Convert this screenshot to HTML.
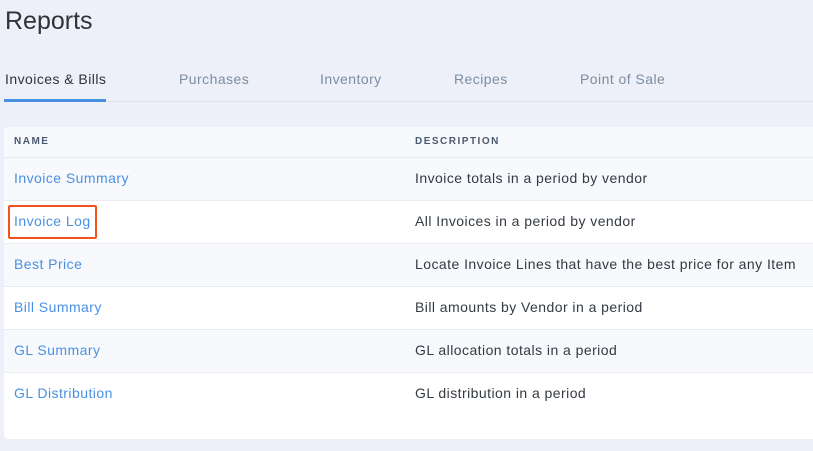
<!DOCTYPE html>
<html><head><style>
*{margin:0;padding:0;box-sizing:border-box}
body{width:813px;height:451px;background:#edf0f8;font-family:"Liberation Sans",sans-serif;position:relative;overflow:hidden}
h1{position:absolute;left:5px;top:7px;font-size:25px;font-weight:normal;color:#2e3338}
.tab{position:absolute;top:71px;font-size:14px;letter-spacing:0.45px;color:#7d8ca3;white-space:nowrap}
.line{position:absolute;left:4px;top:101px;width:809px;height:1px;background:#dfe3ec}
.ul{position:absolute;left:4px;top:99px;width:102px;height:3px;background:#4a90e2}
.card{position:absolute;left:4px;top:127px;width:815px;height:312px;background:#fff;border-radius:4px;overflow:hidden}
.row{position:absolute;left:0;width:100%;height:43px;border-top:1px solid #e8ecf2;font-size:14px;letter-spacing:0.45px;color:#333a42}
.alt{background:#f7f9fc}
.row span{position:absolute;top:12px}
.n{left:10px;color:#4a90e2}
.d{left:411px}
.hd{position:absolute;top:0;left:0;width:100%;height:30px;background:#f7f9fc;font-size:10px;font-weight:bold;letter-spacing:1.5px;color:#4a5a70}
.hd span{position:absolute;top:9px}
.box{position:absolute;left:8px;top:205px;width:89px;height:34px;border:2px solid #f0531c;border-radius:2px}
</style></head><body>
<h1>Reports</h1>
<div class="tab" style="left:5px;color:#2e3338">Invoices &amp; Bills</div>
<div class="tab" style="left:179px">Purchases</div>
<div class="tab" style="left:320px">Inventory</div>
<div class="tab" style="left:454px">Recipes</div>
<div class="tab" style="left:580px">Point of Sale</div>
<div class="line"></div><div class="ul"></div>
<div class="card">
<div class="hd"><span style="left:10px">NAME</span><span style="left:411px">DESCRIPTION</span></div>
<div class="row alt" style="top:30px"><span class="n">Invoice Summary</span><span class="d">Invoice totals in a period by vendor</span></div>
<div class="row" style="top:73px"><span class="n">Invoice Log</span><span class="d">All Invoices in a period by vendor</span></div>
<div class="row alt" style="top:116px"><span class="n">Best Price</span><span class="d">Locate Invoice Lines that have the best price for any Item</span></div>
<div class="row" style="top:159px"><span class="n">Bill Summary</span><span class="d">Bill amounts by Vendor in a period</span></div>
<div class="row alt" style="top:202px"><span class="n">GL Summary</span><span class="d">GL allocation totals in a period</span></div>
<div class="row" style="top:245px;height:67px"><span class="n">GL Distribution</span><span class="d">GL distribution in a period</span></div>
</div>
<div class="box"></div>
</body></html>
